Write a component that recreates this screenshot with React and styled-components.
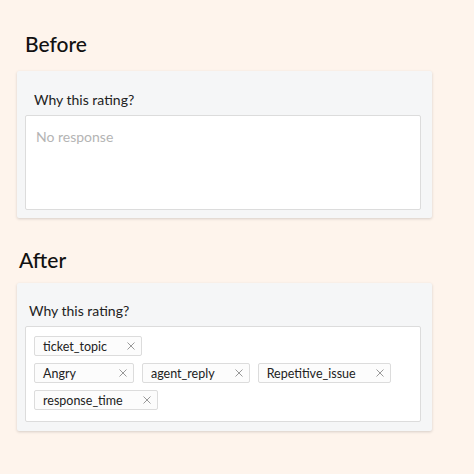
import styled, { createGlobalStyle } from "styled-components";

const GlobalStyle = createGlobalStyle`
  html, body {
    margin: 0;
    padding: 0;
    background: #fef4ec;
  }
  body {
    font-family: "Lato", "Noto Sans", sans-serif;
    color: #222;
  }
`;

const Page = styled.div`
  width: 474px;
  height: 474px;
  box-sizing: border-box;
  padding: 30px 0 0 17px;
  display: flex;
  flex-direction: column;
`;

const Heading = styled.h2`
  margin: 0 0 ${(p) => p.$gap}px ${(p) => p.$indent}px;
  font-size: 21px;
  line-height: 28px;
  font-weight: 500;
  color: #111;
`;

const Card = styled.div`
  width: 415px;
  box-sizing: border-box;
  background: #f5f6f7;
  border-radius: 2px;
  box-shadow: 0 1px 3px rgba(0, 0, 0, 0.16);
  padding: ${(p) => p.$top}px 11px ${(p) => p.$pb}px 8px;
  margin-bottom: ${(p) => p.$bottom || 0}px;
`;

const Label = styled.div`
  font-size: 14px;
  line-height: 18px;
  color: #222;
  margin: 0 0 6px ${(p) => p.$indent}px;
`;

const TextBox = styled.div`
  background: #fff;
  border: 1px solid #dcdcdc;
  border-radius: 2px;
  box-sizing: border-box;
  height: ${(p) => p.$height}px;
`;

const Placeholder = styled.div`
  padding: 12px 10px;
  font-size: 14px;
  line-height: 18px;
  color: #b4b4b4;
`;

const TagList = styled.div`
  display: flex;
  flex-direction: column;
  gap: 7px;
  padding: 9px 8px 0 8px;
`;

const TagRow = styled.div`
  display: flex;
  gap: 8px;
`;

const Tag = styled.div`
  display: flex;
  align-items: center;
  justify-content: space-between;
  min-width: 100px;
  height: 20px;
  box-sizing: border-box;
  padding: 0 6px 0 8px;
  border: 1px solid #dcdcdc;
  border-radius: 2px;
  background: #fcfcfc;
  font-size: 12.5px;
  color: #222;
  gap: 20px;
`;

const Close = styled.svg`
  width: 8px;
  height: 8px;
  flex: none;
`;

const rows = [
  ["ticket_topic"],
  ["Angry", "agent_reply", "Repetitive_issue"],
  ["response_time"],
];

const CloseIcon = () => (
  <Close viewBox="0 0 8 8">
    <path d="M0.5 0.5L7.5 7.5M7.5 0.5L0.5 7.5" stroke="#999" strokeWidth="1" fill="none" />
  </Close>
);

const App = () => {
  return (
    <>
      <GlobalStyle />
      <Page>
        <Heading $indent={8} $gap={13}>Before</Heading>
        <Card $top={20} $pb={8} $bottom={28}>
          <Label $indent={9}>Why this rating?</Label>
          <TextBox $height={95}>
            <Placeholder>No response</Placeholder>
          </TextBox>
        </Card>

        <Heading $indent={2} $gap={9}>After</Heading>
        <Card $top={19} $pb={9}>
          <Label $indent={4}>Why this rating?</Label>
          <TextBox $height={96}>
            <TagList>
              {rows.map((row, i) => (
                <TagRow key={i}>
                  {row.map((t) => (
                    <Tag key={t}>
                      {t}
                      <CloseIcon />
                    </Tag>
                  ))}
                </TagRow>
              ))}
            </TagList>
          </TextBox>
        </Card>
      </Page>
    </>
  );
};

export default App;
